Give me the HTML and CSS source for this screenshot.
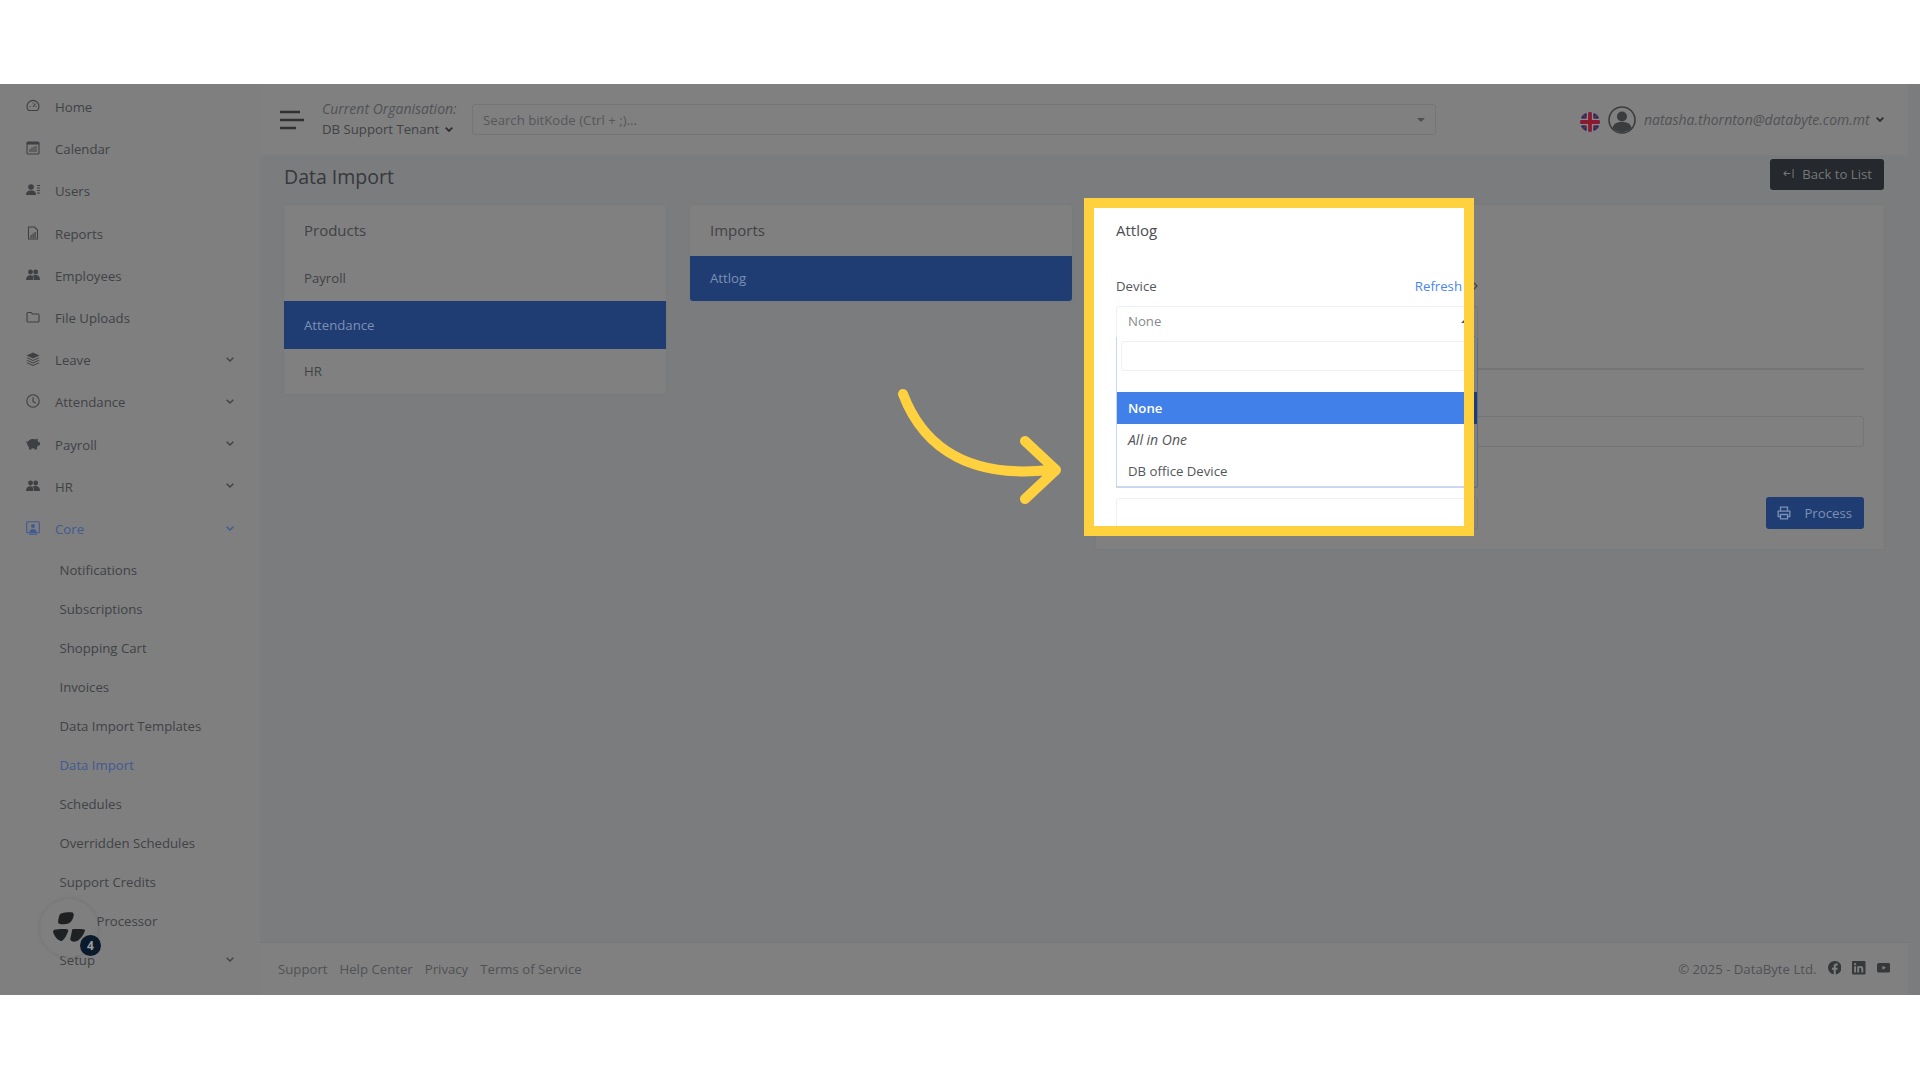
FILE: index.html
```html
<!DOCTYPE html>
<html lang="en">
<head>
<meta charset="utf-8">
<title>Data Import</title>
<link rel="stylesheet" href="styles.css">
</head>
<body>
<div class="band-top"></div>
<div class="app">
  <nav class="sidebar">
    <a class="nav-item"><svg class="nav-icon" viewBox="0 0 14 14"><path class="o" d="M2.600 11.500a6 6 0 1 1 8.800 0z"/><path class="o" d="M7 8l2.500-3.500M3.500 7.500h1M9.500 7.500h1M7 3.600v1"/></svg><span>Home</span></a>
    <a class="nav-item"><svg class="nav-icon" viewBox="0 0 14 14"><rect class="o" x="1" y="1" width="12" height="12" rx="1"/><path class="f" d="M1 1h12v2.500H1zM3.500 8h1v3h-1zM5.500 6.500h1V11h-1zM7.500 5.500h1V11h-1zM9.500 5h1v6h-1z"/></svg><span>Calendar</span></a>
    <a class="nav-item"><svg class="nav-icon" viewBox="0 0 14 14"><circle class="f" cx="5" cy="4" r="2.800"/><path class="f" d="M0 12c0-3.400 2-4.600 5-4.600s5 1.200 5 4.600z"/><path class="o thin" d="M11 2.500h3M11 5h3M11 7.500h3M11 10h3"/></svg><span>Users</span></a>
    <a class="nav-item"><svg class="nav-icon" viewBox="0 0 14 14"><path class="o" d="M2.500 1h6l3 3v9h-9z"/><path class="f" d="M4.500 9h1.200v3H4.500zM6.500 7.500h1.200V12H6.500zM8.500 6h1.200v6H8.500z"/></svg><span>Reports</span></a>
    <a class="nav-item"><svg class="nav-icon" viewBox="0 0 14 14"><circle class="f" cx="4.500" cy="4" r="2.400"/><circle class="f" cx="9.700" cy="4" r="2.400"/><path class="f" d="M0 12c0-3.300 1.800-4.800 4.200-4.800S7 8 7 9v3zM7.600 12V9c0-1-.5-1.400-.8-1.700.7-.2 1.600-.3 2.700-.3 2.800 0 4.500 1.600 4.500 5z"/></svg><span>Employees</span></a>
    <a class="nav-item"><svg class="nav-icon" viewBox="0 0 14 14"><path class="o" d="M1 3.500a1 1 0 0 1 1-1h3.200l1.300 1.500H12a1 1 0 0 1 1 1v6a1 1 0 0 1-1 1H2a1 1 0 0 1-1-1z"/></svg><span>File Uploads</span></a>
    <a class="nav-item"><svg class="nav-icon" viewBox="0 0 14 14"><path class="f" d="M7 .500l6.500 3L7 6.500.5 3.500z"/><path class="f" d="M1.500 5.400L7 8l5.500-2.600 1 .6L7 9 .5 6z"/><path class="f" d="M1.500 8L7 10.600 12.500 8l1 .6L7 11.600.5 8.600z"/><path class="f" d="M1.500 10.400L7 13l5.500-2.600 1 .6L7 14 .5 11z"/></svg><span>Leave</span><svg class="chev" viewBox="0 0 8 5"><path d="M.7.700L4 4l3.300-3.300"/></svg></a>
    <a class="nav-item"><svg class="nav-icon" viewBox="0 0 14 14"><circle class="o" cx="7" cy="7" r="6.200"/><path class="o" d="M7 3.200V7.500l2.800 1.700"/></svg><span>Attendance</span><svg class="chev" viewBox="0 0 8 5"><path d="M.7.700L4 4l3.300-3.300"/></svg></a>
    <a class="nav-item"><svg class="nav-icon" viewBox="0 0 14 14"><ellipse class="f" cx="7" cy="6.800" rx="5.800" ry="4.700"/><path class="f" d="M3 9h2.600v3.500H3zM8.400 9H11v3.500H8.400zM9 3l2.800-1.500-.2 3.500zM11.500 5.300H14v3h-2.500zM.2 4.500l.9-.4c0 .9.5 1.500 1.300 1.600l-.2 1C1 6.600.2 5.700.2 4.500z"/></svg><span>Payroll</span><svg class="chev" viewBox="0 0 8 5"><path d="M.7.700L4 4l3.300-3.300"/></svg></a>
    <a class="nav-item"><svg class="nav-icon" viewBox="0 0 14 14"><circle class="f" cx="4.500" cy="4" r="2.400"/><circle class="f" cx="9.700" cy="4" r="2.400"/><path class="f" d="M0 12c0-3.300 1.800-4.800 4.200-4.800S7 8 7 9v3zM7.600 12V9c0-1-.5-1.400-.8-1.700.7-.2 1.600-.3 2.700-.3 2.800 0 4.500 1.600 4.500 5z"/></svg><span>HR</span><svg class="chev" viewBox="0 0 8 5"><path d="M.7.700L4 4l3.300-3.300"/></svg></a>
    <a class="nav-item is-active"><svg class="nav-icon" viewBox="0 0 14 14"><rect class="o" x=".7" y=".7" width="12.600" height="11" rx="1"/><circle class="f" cx="7" cy="5" r="2"/><path class="f" d="M3.300 11.700c0-2.500 1.500-3.700 3.700-3.700s3.700 1.200 3.700 3.700z"/><path class="f" d="M3 12.700h8v1H3z"/></svg><span>Core</span><svg class="chev" viewBox="0 0 8 5"><path d="M.7.700L4 4l3.300-3.300"/></svg></a>
    <a class="nav-sub">Notifications</a>
    <a class="nav-sub">Subscriptions</a>
    <a class="nav-sub">Shopping Cart</a>
    <a class="nav-sub">Invoices</a>
    <a class="nav-sub">Data Import Templates</a>
    <a class="nav-sub is-active">Data Import</a>
    <a class="nav-sub">Schedules</a>
    <a class="nav-sub">Overridden Schedules</a>
    <a class="nav-sub">Support Credits</a>
    <a class="nav-sub">Email Processor</a>
    <a class="nav-sub">Setup<svg class="chev" viewBox="0 0 8 5"><path d="M.7.700L4 4l3.300-3.300"/></svg></a>
  </nav>

  <main class="main">
    <header class="topbar">
      <svg class="burger" viewBox="0 0 24 20"><path d="M0 2h20M0 10h24M0 18h16"/></svg>
      <div class="org">
        <em class="org-label">Current Organisation:</em>
        <span class="org-name">DB Support Tenant<svg class="chev-bold" viewBox="0 0 8 5"><path d="M.7.700L4 4l3.300-3.300"/></svg></span>
      </div>
      <div class="search"><span>Search bitKode (Ctrl + ;)...</span><i class="caret"></i></div>
      <svg class="flag" viewBox="0 0 20 20">
        <defs><clipPath id="flagclip"><circle cx="10" cy="10" r="10"/></clipPath></defs>
        <g clip-path="url(#flagclip)"><rect width="20" height="20" fill="#7a7a7e"/>
        <path d="M0 0l20 20M20 0L0 20" stroke="#1e2f63" stroke-width="7"/>
        <path d="M0 0l20 20M20 0L0 20" stroke="#8a1f33" stroke-width="1.500"/>
        <path d="M10 0v20M0 10h20" stroke="#8a8a8e" stroke-width="6.500"/>
        <path d="M10 0v20M0 10h20" stroke="#8a1a30" stroke-width="3.800"/></g>
      </svg>
      <svg class="avatar" viewBox="0 0 28 28"><circle cx="14" cy="14" r="13" fill="none" stroke="#3a3c3e" stroke-width="1.600"/><circle cx="14" cy="10.500" r="5" fill="#3a3c3e"/><path d="M4.500 22c1-4.500 4.500-6 9.500-6s8.500 1.500 9.500 6a13 13 0 0 1-19 0z" fill="#3a3c3e"/></svg>
      <em class="email">natasha.thornton@databyte.com.mt</em>
      <svg class="chev-bold" viewBox="0 0 8 5"><path d="M.7.700L4 4l3.300-3.300"/></svg>
    </header>

    <div class="content">
      <div class="page-head">
        <h1>Data Import</h1>
        <a class="btn-back"><svg class="back-icon" viewBox="0 0 12 12"><path d="M11 1v10M8 6H1M3.500 3.500L1 6l2.500 2.500"/></svg>Back to List</a>
      </div>
      <div class="cards">
        <section class="card">
          <h2>Products</h2>
          <a class="list-item">Payroll</a>
          <a class="list-item is-on tall">Attendance</a>
          <a class="list-item last">HR</a>
        </section>
        <section class="card">
          <h2>Imports</h2>
          <a class="list-item is-on flush">Attlog</a>
        </section>
        <section class="card form-card">
          <h2>Attlog</h2>
          <div class="form-body">
            <div class="half field-head"><span>Device</span><span class="refresh-wrap"><a class="refresh">Refresh</a><svg class="chev-r" viewBox="0 0 5 8"><path d="M.7.700L4 4 .7 7.300"/></svg></span></div>
            <div class="half select"></div>
            <div class="rule"></div>
            <div class="input"></div>
            <div class="form-foot">
              <div class="half input"></div>
              <a class="btn-process"><svg class="print-icon" viewBox="0 0 14 14"><path d="M3.500 5V1.200h7V5M3.500 10.500H1.200V5.200h11.600v5.300h-2.300M3.500 8.500h7v4.300h-7z"/></svg>Process</a>
            </div>
            <div class="half dim-menu"><div class="dim-option"></div></div>
          </div>
        </section>
      </div>
    </div>

    <footer class="footer">
      <a>Support</a><a>Help Center</a><a>Privacy</a><a>Terms of Service</a>
      <span class="copy">© 2025 - DataByte Ltd.</span>
      <svg class="social" viewBox="0 0 14 14"><path d="M14 7a7 7 0 1 0-8.100 6.900V9H4.100V7h1.800V5.400c0-1.800 1-2.700 2.600-2.700.8 0 1.600.1 1.600.1v1.800h-.9c-.9 0-1.200.6-1.200 1.100V7h2l-.3 2H8v4.900A7 7 0 0 0 14 7z"/></svg>
      <svg class="social" viewBox="0 0 14 14"><path fill-rule="evenodd" d="M1 0h12a1 1 0 0 1 1 1v12a1 1 0 0 1-1 1H1a1 1 0 0 1-1-1V1a1 1 0 0 1 1-1zM2.200 5.400v6.400h2V5.400zM3.200 2.200a1.150 1.150 0 1 0 0 2.300 1.150 1.150 0 0 0 0-2.300zM5.400 5.400v6.400h2V8.600c0-.9.400-1.500 1.200-1.500s1.100.6 1.100 1.500v3.200h2V8c0-1.900-1-2.800-2.400-2.800-1 0-1.600.5-1.900 1V5.400z"/></svg>
      <svg class="social" viewBox="0 0 14 14"><path fill-rule="evenodd" d="M2 2h10a2 2 0 0 1 2 2v6a2 2 0 0 1-2 2H2a2 2 0 0 1-2-2V4a2 2 0 0 1 2-2zM5.600 4.800v4.400L9.400 7z"/></svg>
    </footer>
  </main>
</div>
<div class="band-bottom"></div>

<svg class="arrow" viewBox="895 385 175 125"><path d="M903 394C925 452 975 478 1050 470M1025 441l31 29-31 29"/></svg>

<div class="spotlight">
  <h2 class="lit-title">Attlog</h2>
  <div class="field-head lit-head"><span>Device</span><a class="lit-refresh">Refresh</a></div>
  <div class="lit-select"><span>None</span><i class="lit-tri"></i></div>
  <div class="lit-menu">
    <div class="lit-search"></div>
    <div class="opt is-sel">None</div>
    <div class="opt first-opt"><em>All in One</em></div>
    <div class="opt">DB office Device</div>
  </div>
  <div class="lit-input"></div>
</div>

<div class="chat-widget">
  <svg class="chat-logo" viewBox="0 0 32 30"><path d="M6 1.500C9 .300 14 0 16.500.3c1.800.2 2.600 1.600 2.100 3.600-.7 2.800-2 6-4.800 7.300C11.500 12.300 7 12.600 4.800 12c-1.500-.4-1.900-1.500-1.600-3C3.700 6.500 4 2.400 6 1.500z" transform="translate(2 0)"/><path d="M1.500 17.700c3.500-.9 9.500-1 12.400-.5 1.100.2 1.600 1 1.100 2.200-1.200 3.200-2.900 7-5.500 9-1.200.9-2.600.6-3.800-.3C2.900 26.400.6 22.700.1 19.800c-.2-1 .4-1.800 1.400-2.100z"/><path d="M18.200 17.300c3.700-.5 9.500-.4 12.400-.1 1.100.1 1.600 1 1.200 2.100-1.300 3.200-3.600 7-6.700 9.200-2 1.300-4.200 1.400-6.200.7-1.300-.5-1.900-1.600-1.500-3 .6-2.400 1.300-5.600 1.500-7.100 .1-.7.200-1.700.8-1.800z"/></svg>
  <span class="chat-badge">4</span>
</div>
</body>
</html>
```
FILE: styles.css
```css
* { box-sizing: border-box; }
html, body { margin: 0; padding: 0; }
body {
  position: relative;
  width: 1920px;
  height: 1080px;
  overflow: hidden;
  background: #fff;
  font-family: "Open Sans", "Noto Sans", sans-serif;
  font-size: 13.200px;
  color: #404245;
}
a { color: inherit; text-decoration: none; }
h1, h2 { margin: 0; font-weight: 400; }

.band-top { height: 84px; background: #fff; }
.band-bottom { height: 85px; background: #fff; }
.app { display: flex; height: 911px; background: #7b7c7e; }

/* sidebar */
.sidebar {
  width: 260px;
  flex: none;
  padding-top: 2px;
  background: #7f7f7f;
  overflow: hidden;
}
.nav-item {
  display: flex;
  align-items: center;
  height: 42.200px;
  padding: 0 26px;
}
.nav-icon { width: 14px; height: 14px; margin-right: 15px; flex: none; position: relative; top: -1px; }
.nav-icon .o { fill: none; stroke: #3e4043; stroke-width: 1.100; }
.nav-icon .thin { stroke-width: 1; }
.nav-icon .f { fill: #3e4043; }
.chev { width: 8px; height: 5px; margin-left: auto; fill: none; stroke: #3e4043; stroke-width: 1.300; position: relative; top: -1px; }
.nav-item.is-active { color: #3f5a94; }
.is-active .nav-icon .o { stroke: #3f5a94; }
.is-active .nav-icon .f { fill: #3f5a94; }
.is-active .chev { stroke: #3f5a94; top: 0; }
.nav-sub {
  display: flex;
  align-items: center;
  height: 39px;
  padding: 0 26px 0 59.500px;
}
.nav-sub .chev { top: 0; }
.nav-sub.is-active { color: #3f5a94; }

/* main */
.main { flex: 1; min-width: 0; display: flex; flex-direction: column; }
.topbar {
  display: flex;
  align-items: center;
  height: 71px;
  margin-right: 12px;
  padding-left: 20px;
  background: #808080;
}
.burger { width: 24px; height: 20px; flex: none; fill: none; stroke: #2f3133; stroke-width: 2.600; }
.org { display: flex; flex-direction: column; margin-left: 18px; width: 150px; flex: none; line-height: 21px; padding-bottom: 1px; }
.org-label { color: #505255; font-size: 14px; white-space: nowrap; }
.org-name { display: flex; align-items: center; }
.chev-bold { width: 8px; height: 5px; margin-left: 6px; fill: none; stroke: #2f3133; stroke-width: 1.900; flex: none; }
.search {
  display: flex;
  align-items: center;
  justify-content: space-between;
  width: 964px;
  height: 31px;
  flex: none;
  padding: 0 11px 0 10px;
  border: 1px solid #747577;
  border-radius: 3px;
  color: #55575a;
}
.caret { width: 0; height: 0; border: 4px solid transparent; border-top-color: #4d4f52; border-bottom: 0; margin-right: -1px; }
.flag { width: 20px; height: 20px; margin-left: 144px; flex: none; position: relative; top: 2px; }
.avatar { width: 28px; height: 28px; margin-left: 8px; flex: none; }
.email { margin-left: 8px; color: #505255; white-space: nowrap; font-size: 14px; }

/* content */
.content { flex: 1; padding: 4px 36px 0 24px; min-height: 0; }
.page-head { display: flex; justify-content: space-between; height: 46px; }
h1 { font-size: 19.500px; line-height: 27px; padding-top: 4px; color: #36383b; }
.btn-back {
  display: flex;
  align-items: center;
  height: 31px;
  padding: 0 12px 2px 13px;
  background: #25282c;
  border-radius: 3px;
  color: #76787a;
}
.back-icon { width: 11px; height: 11px; margin-right: 8px; fill: none; stroke: #76787a; stroke-width: 1.100; }
.cards { display: grid; grid-template-columns: 382px 382px 1fr; gap: 24px; align-items: start; }
.card { background: #808080; border-radius: 3px; box-shadow: 0 0 3px rgba(0,0,0,.05); }
.card h2 { font-size: 15px; line-height: 50px; height: 51px; padding-left: 20px; color: #404245; }
.list-item { display: flex; align-items: center; height: 45px; padding: 0 0 1px 20px; }
.list-item.is-on { background: #1f3d73; color: #7d90b3; }
.list-item.tall { height: 48px; }
.list-item.flush { border-radius: 0 0 3px 3px; }
.list-item.last { height: 45px; }

/* form card (dim layer) */
.form-card { position: relative; height: 344px; }
.form-body { position: relative; padding: 20px 20px 20px 21px; }
.half { width: 361px; }
.form-card .half { margin-left: -1px; width: 362px; }
.field-head { display: flex; justify-content: space-between; align-items: center; height: 20px; }
.refresh-wrap { display: flex; align-items: center; gap: 13px; }
.chev-r { width: 5px; height: 8px; fill: none; stroke: #3e4043; stroke-width: 1.200; }
.select { height: 31px; margin-top: 10px; border: 1px solid #747577; border-radius: 3px; }
.rule { height: 2px; margin-top: 31px; background: #747577; }
.input { height: 31px; margin-top: 46px; border: 1px solid #747577; border-radius: 3px; }
.form-foot { display: flex; justify-content: space-between; align-items: flex-start; }
.form-foot .input { margin-top: 50px; height: 32px; }
.btn-process {
  display: flex;
  align-items: center;
  height: 32px;
  margin-top: 50px;
  padding: 0 12px 1px 11px;
  background: #1f3d73;
  border-radius: 3px;
  color: #7d90b3;
}
.print-icon { width: 14px; height: 14px; margin-right: 13px; fill: none; stroke: #7d90b3; stroke-width: 1.300; }
.form-card .dim-menu {
  position: absolute;
  left: 21px;
  top: 81px;
  height: 151px;
  background: #808080;
  border: 1px solid #5c6b86;
  border-top: 0;
  border-radius: 0 0 3px 3px;
}
.dim-option { margin-top: 55px; height: 32px; background: #1f3d73; }

/* spotlight over the dimmed page */
.spotlight {
  position: absolute;
  left: 1084px;
  top: 198px;
  width: 390px;
  height: 338px;
  border: 10px solid #ffd13f;
  background: #fff;
  overflow: hidden;
  padding: 10px 0 0 22px;
  color: #54565a;
}
.lit-title { font-size: 15px; line-height: 24px; height: 24px; color: #4a4c50; }
.lit-head { width: 346px; margin-top: 34px; color: #54565a; }
.lit-refresh { color: #4a86ee; }
.lit-select {
  display: flex;
  align-items: center;
  justify-content: space-between;
  width: 361px;
  height: 31px;
  margin-top: 10px;
  padding: 0 0 3px 11px;
  border: 1px solid #edf0f4;
  border-bottom: 0;
  border-radius: 3px 3px 0 0;
  color: #888a8d;
}
.lit-tri {
  position: absolute;
  left: 367px;
  top: 112px;
  width: 0;
  height: 0;
  border: 3px solid transparent;
  border-bottom-color: #55575a;
  border-top: 0;
}
.lit-menu {
  width: 361px;
  height: 151px;
  padding-top: 4px;
  border-left: 1px solid #c9d8f0;
  border-bottom: 2px solid #c9d8f0;
}
.lit-search {
  height: 30px;
  margin: 0 4px 21px 4px;
  border: 1.500px solid #edf0f4;
  border-radius: 3px;
}
.opt { display: flex; align-items: center; height: 32px; padding-left: 11px; color: #54565a; }
.opt.is-sel { background: #4080e8; color: #fff; font-weight: 600; height: 32px; }
.opt.first-opt { height: 31px; font-size: 14px; }
.lit-input { width: 361px; height: 34px; margin-top: 10px; border: 1.500px solid #edf0f4; border-radius: 3px; }

.arrow {
  position: absolute;
  left: 895px;
  top: 385px;
  width: 175px;
  height: 125px;
  fill: none;
  stroke: #ffd13f;
  stroke-width: 10;
  stroke-linecap: round;
  stroke-linejoin: round;
}

/* footer */
.footer {
  display: flex;
  align-items: center;
  gap: 12px;
  height: 53px;
  margin-right: 12px;
  padding: 0 18px;
  background: #808080;
  border-top: 1px solid #75777b;
  color: #4f5154;
}
.copy { margin-left: auto; }
.social { width: 13.500px; height: 13.500px; margin-left: -1px; fill: #36383b; flex: none; position: relative; top: -1px; }

/* chat widget */
.chat-widget {
  position: absolute;
  left: 40px;
  top: 899px;
  width: 58px;
  height: 58px;
  border-radius: 50%;
  background: #7f7f7f;
  box-shadow: 0 0 4px rgba(0,0,0,.12);
}
.chat-logo { position: absolute; left: 13px; top: 13px; width: 32px; height: 30px; fill: #1f2022; }
.chat-badge {
  position: absolute;
  left: 40px;
  top: 36px;
  width: 21px;
  height: 21px;
  border-radius: 50%;
  background: #0b1a2b;
  color: #9a9ea3;
  font-size: 12px;
  font-weight: 700;
  line-height: 21px;
  text-align: center;
}
```
